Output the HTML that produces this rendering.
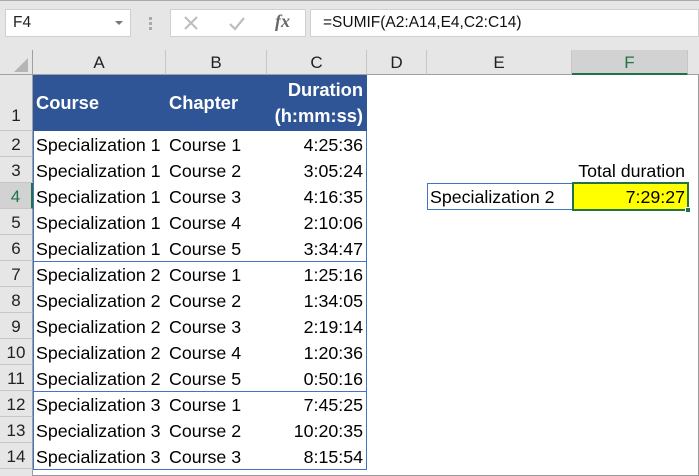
<!DOCTYPE html>
<html><head><style>
*{margin:0;padding:0;box-sizing:border-box}
body{width:699px;height:476px;overflow:hidden;background:#fff;font-family:"Liberation Sans",Arial,sans-serif;position:relative;border-right:1px solid #9a9a9a;border-bottom:1px solid #9a9a9a}
.a{position:absolute}
.t{position:absolute;font-size:17.8px;color:#000;white-space:nowrap;line-height:28px}
.rh{position:absolute;left:0;width:33px;height:26px;background:#e6e6e6;border-bottom:1px solid #c6c6c6;border-right:1px solid #a0a0a0;text-align:center;font-size:17px;line-height:27px;color:#222}
.ch{position:absolute;top:50px;height:25px;background:#e6e6e6;border-right:1px solid #c6c6c6;border-bottom:1px solid #a0a0a0;text-align:center;font-size:17px;line-height:26px;color:#222}
.h{color:#fff;font-weight:bold;font-size:18.3px}
</style></head><body>
<div class="a" style="left:0;top:0;width:699px;height:50px;background:#e6e6e6;border-top:1px solid #aaa"></div>
<div class="a" style="left:5px;top:9px;width:126px;height:28px;background:#fff;border:1px solid #d0d0d0;font-size:15.5px;line-height:26px;padding-left:7px;color:#222">F4</div>
<div class="a" style="left:115px;top:21px;width:0;height:0;border-left:4px solid transparent;border-right:4px solid transparent;border-top:4px solid #777"></div>
<div class="a" style="left:149px;top:17px;width:3px;height:3px;background:#aaa;box-shadow:0 5px 0 #aaa,0 10px 0 #aaa"></div>
<div class="a" style="left:170px;top:9px;width:136px;height:28px;background:#fff;border:1px solid #d0d0d0"></div>
<svg class="a" style="left:183px;top:15px" width="16" height="16"><path d="M2 2L14 14M14 2L2 14" stroke="#bdbdbd" stroke-width="2"/></svg>
<svg class="a" style="left:228px;top:15px" width="18" height="16"><path d="M2 9L7 14L16 3" stroke="#bdbdbd" stroke-width="2.2" fill="none"/></svg>
<div class="a" style="left:275px;top:11px;font-family:'Liberation Serif',serif;font-style:italic;font-weight:bold;font-size:18px;color:#666">fx</div>
<div class="a" style="left:310px;top:9px;width:389px;height:28px;background:#fff;border:1px solid #d0d0d0;font-size:15.5px;line-height:26px;padding-left:12px;color:#111">=SUMIF(A2:A14,E4,C2:C14)</div>

<div class="a" style="left:0;top:50px;width:33px;height:25px;background:#e6e6e6;border-right:1px solid #a0a0a0;border-bottom:1px solid #a0a0a0"></div>
<div class="a" style="left:14px;top:58px;width:0;height:0;border-left:14px solid transparent;border-bottom:14px solid #b5b5b5"></div>
<div class="ch" style="left:33px;width:133px">A</div>
<div class="ch" style="left:166px;width:101px">B</div>
<div class="ch" style="left:267px;width:100px">C</div>
<div class="ch" style="left:367px;width:60px">D</div>
<div class="ch" style="left:427px;width:145px">E</div>
<div class="ch" style="left:572px;width:116px;background:#d2d2d2;border-bottom:2px solid #217346;color:#217346">F</div>
<div class="ch" style="left:688px;width:11px;border-right:none"></div>

<div class="rh" style="top:75px;height:56px;line-height:82px">1</div>
<div class="rh" style="top:131px">2</div><div class="rh" style="top:157px">3</div>
<div class="rh" style="top:183px;background:#d2d2d2;border-right:2px solid #217346;color:#217346">4</div>
<div class="rh" style="top:209px">5</div><div class="rh" style="top:235px">6</div><div class="rh" style="top:261px">7</div>
<div class="rh" style="top:287px">8</div><div class="rh" style="top:313px">9</div><div class="rh" style="top:339px">10</div>
<div class="rh" style="top:365px">11</div><div class="rh" style="top:391px">12</div><div class="rh" style="top:417px">13</div>
<div class="rh" style="top:443px">14</div><div class="rh" style="top:469px;height:7px;border-bottom:none"></div>

<div class="a" style="left:33px;top:75px;width:334px;height:56px;background:#2f5597"></div>
<div class="t h" style="left:36px;top:89px">Course</div>
<div class="t h" style="left:169px;top:89px">Chapter</div>
<div class="t h" style="left:257px;width:106px;text-align:right;top:76px">Duration</div>
<div class="t h" style="left:257px;width:106px;text-align:right;top:102px">(h:mm:ss)</div>
<div class="a" style="left:33px;top:131px;width:334px;height:339px;border:1px solid #4472c4;border-top:none"></div>
<div class="a" style="left:33px;top:261px;width:334px;height:1px;background:#4472c4"></div>
<div class="a" style="left:33px;top:391px;width:334px;height:1px;background:#4472c4"></div>

<div class="t" style="left:36px;top:131px">Specialization 1</div><div class="t" style="left:169px;top:131px">Course 1</div><div class="t" style="left:267px;width:96px;text-align:right;top:131px">4:25:36</div>
<div class="t" style="left:36px;top:157px">Specialization 1</div><div class="t" style="left:169px;top:157px">Course 2</div><div class="t" style="left:267px;width:96px;text-align:right;top:157px">3:05:24</div>
<div class="t" style="left:36px;top:183px">Specialization 1</div><div class="t" style="left:169px;top:183px">Course 3</div><div class="t" style="left:267px;width:96px;text-align:right;top:183px">4:16:35</div>
<div class="t" style="left:36px;top:209px">Specialization 1</div><div class="t" style="left:169px;top:209px">Course 4</div><div class="t" style="left:267px;width:96px;text-align:right;top:209px">2:10:06</div>
<div class="t" style="left:36px;top:235px">Specialization 1</div><div class="t" style="left:169px;top:235px">Course 5</div><div class="t" style="left:267px;width:96px;text-align:right;top:235px">3:34:47</div>
<div class="t" style="left:36px;top:261px">Specialization 2</div><div class="t" style="left:169px;top:261px">Course 1</div><div class="t" style="left:267px;width:96px;text-align:right;top:261px">1:25:16</div>
<div class="t" style="left:36px;top:287px">Specialization 2</div><div class="t" style="left:169px;top:287px">Course 2</div><div class="t" style="left:267px;width:96px;text-align:right;top:287px">1:34:05</div>
<div class="t" style="left:36px;top:313px">Specialization 2</div><div class="t" style="left:169px;top:313px">Course 3</div><div class="t" style="left:267px;width:96px;text-align:right;top:313px">2:19:14</div>
<div class="t" style="left:36px;top:339px">Specialization 2</div><div class="t" style="left:169px;top:339px">Course 4</div><div class="t" style="left:267px;width:96px;text-align:right;top:339px">1:20:36</div>
<div class="t" style="left:36px;top:365px">Specialization 2</div><div class="t" style="left:169px;top:365px">Course 5</div><div class="t" style="left:267px;width:96px;text-align:right;top:365px">0:50:16</div>
<div class="t" style="left:36px;top:391px">Specialization 3</div><div class="t" style="left:169px;top:391px">Course 1</div><div class="t" style="left:267px;width:96px;text-align:right;top:391px">7:45:25</div>
<div class="t" style="left:36px;top:417px">Specialization 3</div><div class="t" style="left:169px;top:417px">Course 2</div><div class="t" style="left:267px;width:96px;text-align:right;top:417px">10:20:35</div>
<div class="t" style="left:36px;top:443px">Specialization 3</div><div class="t" style="left:169px;top:443px">Course 3</div><div class="t" style="left:267px;width:96px;text-align:right;top:443px">8:15:54</div>

<div class="t" style="left:560px;width:125px;text-align:right;top:157px">Total duration</div>
<div class="a" style="left:427px;top:183px;width:146px;height:27px;border:1px solid #4472c4"></div>
<div class="t" style="left:430px;top:183px">Specialization 2</div>
<div class="a" style="left:572px;top:182px;width:117px;height:29px;background:#ffff00;border:2px solid #217346"></div>
<div class="t" style="left:572px;width:113px;text-align:right;top:183px">7:29:27</div>
<div class="a" style="left:685px;top:207px;width:6px;height:6px;background:#217346;border:1px solid #fff"></div>
</body></html>
